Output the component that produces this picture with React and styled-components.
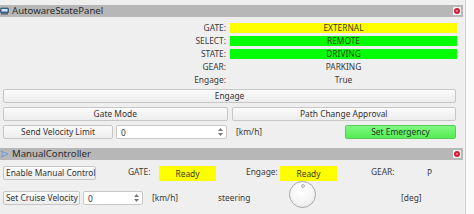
import React from "react";
import styled, { createGlobalStyle } from "styled-components";

const Global = createGlobalStyle`
  html, body { margin: 0; padding: 0; background: #efefef; }
  body { font-family: "Noto Sans", "DejaVu Sans", sans-serif; font-size: 8.4px; color: #3a3a3a; }
  * { box-sizing: border-box; }
`;

const Page = styled.div`
  display: flex;
  width: 474px;
  height: 214px;
  overflow: hidden;
`;

const Dock = styled.div`
  width: 466px;
  display: flex;
  flex-direction: column;
  background: #efefef;
  border-right: 1px solid #d2d2d2;
`;

const Side = styled.div`
  flex: 1;
  background: #fafafa;
`;

const Panel = styled.section`
  display: flex;
  flex-direction: column;
  padding-top: ${(p) => p.$top}px;
`;

const TitleBar = styled.div`
  height: 12px;
  margin-right: 2px;
  background: #b7b7b7;
  display: flex;
  align-items: center;
  gap: 3px;
  padding-right: 2px;
  font-size: 9.6px;
  color: #2e2e2e;
`;

const TitleText = styled.span`
  flex: 1;
  line-height: 12px;
`;

const Body = styled.div`
  display: flex;
  flex-direction: column;
  padding: ${(p) => p.$pad};
`;

const StatusGrid = styled.div`
  display: grid;
  grid-template-columns: 223px 227px;
  column-gap: 4px;
  row-gap: 3px;
`;

const Label = styled.div`
  text-align: right;
  line-height: 10px;
  height: 10px;
  white-space: nowrap;
`;

const Value = styled.div`
  height: 10px;
  line-height: 10px;
  text-align: center;
  background: ${(p) => p.$bg || "transparent"};
  color: ${(p) => (p.$bg ? "#3a3a1a" : "#3a3a3a")};
  white-space: nowrap;
`;

const Button = styled.button`
  font-family: inherit;
  font-size: 8.4px;
  color: #333;
  height: 14px;
  padding: 0 2px;
  margin: 0;
  margin-top: ${(p) => p.$mt ?? 0}px;
  border: 1px solid #c6c6c6;
  border-radius: 2px;
  background: linear-gradient(#fbfbfb, #ededed);
  white-space: nowrap;
  line-height: 12px;
  width: ${(p) => (p.$w ? `${p.$w}px` : "auto")};
  flex: ${(p) => (p.$grow ? 1 : "none")};
`;

const GreenButton = styled(Button)`
  background: linear-gradient(#80f880, #55eb55);
  border-color: #55cc55;
  color: #1f3a1f;
  margin-left: auto;
`;

const Row = styled.div`
  display: flex;
  align-items: ${(p) => p.$align || "center"};
  gap: ${(p) => p.$gap ?? 3}px;
  margin-top: ${(p) => p.$mt ?? 0}px;
  height: ${(p) => p.$h ?? 14}px;
`;

const Spin = styled.div`
  width: ${(p) => p.$w}px;
  height: 14px;
  background: #fff;
  border: 1px solid #c8c8c8;
  border-radius: 2px;
  display: flex;
  align-items: center;
  padding-left: 4px;
  color: #333;
  margin-left: ${(p) => p.$ml ?? 0}px;
  margin-top: ${(p) => p.$mt ?? 0}px;
`;

const SpinText = styled.span`
  flex: 1;
`;

const Arrows = styled.div`
  width: 7px;
  display: flex;
  flex-direction: column;
  align-items: center;
  gap: 2px;
  margin-right: 2px;
`;

const Slot = styled.span`
  display: inline-block;
  width: ${(p) => (p.$w ? `${p.$w}px` : "auto")};
  margin-left: ${(p) => p.$ml ?? 0}px;
  margin-top: ${(p) => p.$mt ?? 0}px;
  white-space: nowrap;
  line-height: 10px;
`;

const Pill = styled.div`
  width: 57px;
  height: 15px;
  line-height: 15px;
  background: #ffff00;
  text-align: center;
  color: #3a3a1a;
`;

const Dial = styled.div`
  width: 27px;
  height: 27px;
  border-radius: 50%;
  border: 1px solid #a8a8a8;
  background: radial-gradient(circle at 45% 35%, #ffffff 0%, #f5f5f5 55%, #e0e0e0 100%);
  position: relative;
  margin-top: ${(p) => p.$mt ?? 0}px;
`;

const DialDot = styled.div`
  position: absolute;
  width: 4px;
  height: 4px;
  border-radius: 50%;
  border: 1px solid #b4b4b4;
  background: #eaeaea;
  left: 10.5px;
  top: 2px;
`;

const CloseIcon = () => (
  <svg width="8" height="8" viewBox="0 0 8 8">
    <rect x="0" y="0" width="8" height="8" rx="1" fill="#f5f5f5" />
    <circle cx="4" cy="4" r="3" fill="#d41f3c" />
    <circle cx="4" cy="4" r="1" fill="#f08a9a" />
  </svg>
);

const PanelIcon = () => (
  <svg width="9" height="8" viewBox="0 0 9 8">
    <rect x="0.5" y="1" width="8" height="5" rx="1" fill="#3d6fa8" stroke="#203a5a" strokeWidth="0.6" />
    <rect x="1.5" y="2" width="6" height="2.5" fill="#cfe3f7" />
    <rect x="1" y="6.3" width="7" height="1.2" fill="#555" />
  </svg>
);

const ControllerIcon = () => (
  <svg width="9" height="8" viewBox="0 0 9 8">
    <path d="M1 1 L8 4 L1 7 L3 4 Z" fill="#9cc1e6" stroke="#5d88b8" strokeWidth="0.6" />
  </svg>
);

const ArrowUp = () => (
  <svg width="5" height="3" viewBox="0 0 5 3"><path d="M0 3 L2.5 0 L5 3 Z" fill="#777" /></svg>
);
const ArrowDown = () => (
  <svg width="5" height="3" viewBox="0 0 5 3"><path d="M0 0 L2.5 3 L5 0 Z" fill="#777" /></svg>
);

const SpinBox = ({ w, ml, mt }) => (
  <Spin $w={w} $ml={ml} $mt={mt}>
    <SpinText>0</SpinText>
    <Arrows>
      <ArrowUp />
      <ArrowDown />
    </Arrows>
  </Spin>
);

const status = [
  ["GATE:", "EXTERNAL", "#ffff00"],
  ["SELECT:", "REMOTE", "#00ff00"],
  ["STATE:", "DRIVING", "#00ff00"],
  ["GEAR:", "PARKING", null],
  ["Engage:", "True", null],
];

export default function App() {
  return (
    <Page>
      <Global />
      <Dock>
        <Panel $top={5}>
          <TitleBar>
            <PanelIcon />
            <TitleText>AutowareStatePanel</TitleText>
            <CloseIcon />
          </TitleBar>
          <Body $pad="6px 9px 0 3px">
            <StatusGrid>
              {status.map(([l, v, bg]) => (
                <React.Fragment key={l}>
                  <Label>{l}</Label>
                  <Value $bg={bg}>{v}</Value>
                </React.Fragment>
              ))}
            </StatusGrid>
            <Row $mt={4}>
              <Button $grow>Engage</Button>
            </Row>
            <Row $mt={4} $gap={4}>
              <Button $grow>Gate Mode</Button>
              <Button $grow>Path Change Approval</Button>
            </Row>
            <Row $mt={4} $gap={0}>
              <Button $w={110}>Send Velocity Limit</Button>
              <SpinBox w={111} ml={3} />
              <Slot $ml={9}>[km/h]</Slot>
              <GreenButton $w={111}>Set Emergency</GreenButton>
            </Row>
          </Body>
        </Panel>
        <Panel $top={9}>
          <TitleBar>
            <ControllerIcon />
            <TitleText>ManualController</TitleText>
            <CloseIcon />
          </TitleBar>
          <Body $pad="6px 9px 0 3px">
            <Row $h={15} $gap={0} $align="flex-start">
              <Button $w={93} $mt={0}>Enable Manual Control</Button>
              <Slot $ml={32} $w={31} $mt={1}>GATE:</Slot>
              <Pill>Ready</Pill>
              <Slot $ml={30} $w={34} $mt={1}>Engage:</Slot>
              <Pill>Ready</Pill>
              <Slot $ml={34} $w={56} $mt={1}>GEAR:</Slot>
              <Slot $mt={2}>P</Slot>
            </Row>
            <Row $h={29} $gap={0} $align="flex-start">
              <Button $w={77} $mt={10}>Set Cruise Velocity</Button>
              <SpinBox w={60} ml={3} mt={10} />
              <Slot $ml={9} $w={66} $mt={12}>[km/h]</Slot>
              <Slot $w={71} $mt={12}>steering</Slot>
              <Dial $mt={0}>
                <DialDot />
              </Dial>
              <Slot $ml={85} $mt={12}>[deg]</Slot>
            </Row>
          </Body>
        </Panel>
      </Dock>
      <Side />
    </Page>
  );
}
